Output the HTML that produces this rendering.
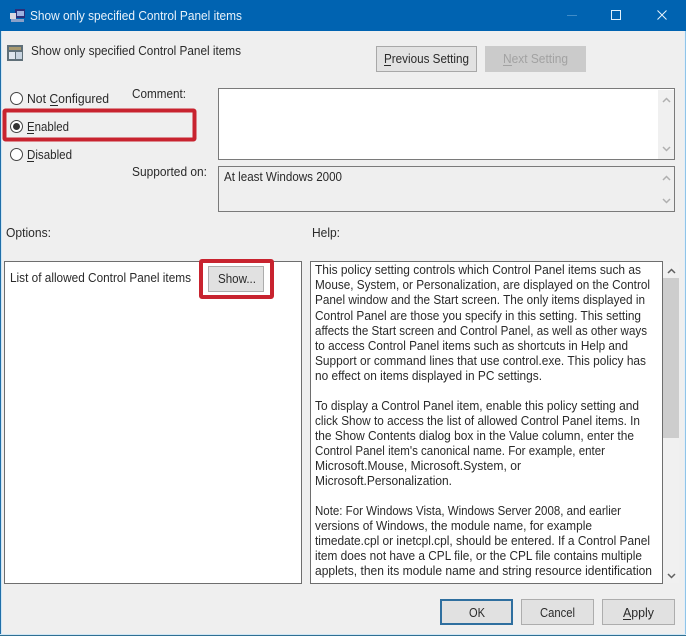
<!DOCTYPE html>
<html><head><meta charset="utf-8"><style>
html,body{margin:0;padding:0;background:#f0f0f0}
svg{display:block}
text{font-family:"Liberation Sans",sans-serif;font-size:12.5px;fill:#2a2a2a}
</style></head><body>
<svg width="686" height="636" viewBox="0 0 686 636" xmlns="http://www.w3.org/2000/svg">
<rect width="686" height="636" fill="#efefef"/>
<!-- window frame -->
<rect x="0" y="0" width="686" height="31" fill="#0063b1"/>
<rect x="0" y="31" width="1" height="605" fill="#1f6ea8"/>
<rect x="1" y="31" width="1" height="603" fill="#cfe6f5"/>
<rect x="684" y="31" width="1" height="603" fill="#e4eef7"/>
<rect x="685" y="31" width="1" height="605" fill="#8fc4e8"/>
<rect x="0" y="634" width="686" height="1" fill="#cfe6f5"/>
<rect x="0" y="635" width="686" height="1" fill="#2f6f92"/>
<!-- title icon -->
<rect x="15" y="9" width="10" height="9" fill="#2b2f7a"/>
<rect x="17" y="11" width="7" height="5" fill="#9fb2e0"/>
<rect x="10" y="13" width="6" height="6" fill="#d8d8e0"/>
<rect x="11" y="19" width="13" height="3" fill="#8aa0c8"/>
<text x="30" y="20" textLength="212" lengthAdjust="spacingAndGlyphs" style="fill:#e8f2fa">Show only specified Control Panel items</text>
<!-- caption buttons -->
<rect x="567" y="15" width="10" height="1" fill="#3f8cc8"/>
<rect x="611.500" y="10.500" width="9" height="9" fill="none" stroke="#dff0fb" stroke-width="1"/>
<path d="M657.500 10.500L666.500 19.500M666.500 10.500L657.500 19.500" stroke="#e8f4fc" stroke-width="1" fill="none"/>
<!-- header icon -->
<rect x="7" y="45" width="16" height="16" fill="#5f6f78"/>
<rect x="9" y="47" width="12" height="3" fill="#a89a70"/>
<rect x="9" y="52" width="6" height="7" fill="#dfe6ee"/>
<rect x="16" y="52" width="6" height="7" fill="#c8d4e0"/>
<text x="31" y="55" textLength="210" lengthAdjust="spacingAndGlyphs">Show only specified Control Panel items</text>
<!-- top buttons -->
<rect x="376.500" y="46.500" width="100" height="25" fill="#e2e2e2" stroke="#a8a8a8"/>
<text x="384" y="63" textLength="85" lengthAdjust="spacingAndGlyphs">Previous Setting</text>
<rect x="384" y="65" width="7" height="1" fill="#2a2a2a"/>
<rect x="485" y="46" width="101" height="26" fill="#cbcbcb"/>
<text x="503" y="63" textLength="65" lengthAdjust="spacingAndGlyphs" style="fill:#a2a2a2">Next Setting</text>
<rect x="503" y="65" width="9" height="1" fill="#a2a2a2"/>
<!-- radios -->
<circle cx="16.500" cy="98.500" r="6" fill="#fff" stroke="#444"/>
<text x="27" y="103" textLength="82" lengthAdjust="spacingAndGlyphs">Not Configured</text>
<rect x="50" y="105" width="8" height="1" fill="#2a2a2a"/>
<circle cx="16.500" cy="126.500" r="6" fill="#fff" stroke="#444"/>
<circle cx="16.500" cy="126.500" r="3.500" fill="#333"/>
<text x="27" y="131" textLength="42" lengthAdjust="spacingAndGlyphs">Enabled</text>
<rect x="27" y="133" width="7" height="1" fill="#2a2a2a"/>
<circle cx="16.500" cy="154.500" r="6" fill="#fff" stroke="#444"/>
<text x="27" y="159" textLength="45" lengthAdjust="spacingAndGlyphs">Disabled</text>
<rect x="27" y="161" width="7" height="1" fill="#2a2a2a"/>
<!-- red box 1 -->
<rect x="4.500" y="110.500" width="190" height="29" fill="none" stroke="#c8232f" stroke-width="4" rx="1"/>
<text x="132" y="98" textLength="54" lengthAdjust="spacingAndGlyphs">Comment:</text>
<text x="132" y="176" textLength="75" lengthAdjust="spacingAndGlyphs">Supported on:</text>
<!-- comment box -->
<rect x="218.500" y="88.500" width="456" height="71" fill="#fff" stroke="#7a7a7a"/>
<rect x="658" y="90" width="16" height="69" fill="#f0f0f0"/>
<path d="M663 102L666.500 98.500L670 102" stroke="#b0b0b0" stroke-width="1.500" fill="none"/>
<path d="M663 147L666.500 150.500L670 147" stroke="#b0b0b0" stroke-width="1.500" fill="none"/>
<!-- supported box -->
<rect x="218.500" y="166.500" width="456" height="45" fill="#efefef" stroke="#7a7a7a"/>
<text x="224" y="181" textLength="118" lengthAdjust="spacingAndGlyphs">At least Windows 2000</text>
<path d="M663 180L666.500 176.500L670 180" stroke="#b0b0b0" stroke-width="1.500" fill="none"/>
<path d="M663 199L666.500 202.500L670 199" stroke="#b0b0b0" stroke-width="1.500" fill="none"/>
<text x="6" y="237" textLength="45" lengthAdjust="spacingAndGlyphs">Options:</text>
<text x="312" y="237" textLength="28" lengthAdjust="spacingAndGlyphs">Help:</text>
<!-- options panel -->
<rect x="4.500" y="261.500" width="297" height="322" fill="#fff" stroke="#6e6e6e"/>
<text x="10" y="282" textLength="181" lengthAdjust="spacingAndGlyphs">List of allowed Control Panel items</text>
<rect x="208.500" y="266.500" width="55" height="25" fill="#e1e1e1" stroke="#adadad"/>
<text x="218" y="283" textLength="38" lengthAdjust="spacingAndGlyphs">Show...</text>
<rect x="201" y="261" width="71" height="36" fill="none" stroke="#c8232f" stroke-width="4" rx="1"/>
<!-- help panel -->
<rect x="310.500" y="261.500" width="352" height="322" fill="#fff" stroke="#6e6e6e"/>
<rect x="663" y="262" width="16" height="321" fill="#f0f0f0"/>
<rect x="663" y="278" width="16" height="160" fill="#cdcdcd"/>
<path d="M668 273L671.500 269.500L675 273" stroke="#606060" stroke-width="1.500" fill="none"/>
<path d="M668 574L671.500 577.500L675 574" stroke="#606060" stroke-width="1.500" fill="none"/>
<g>
<text x="315" y="274" textLength="326" lengthAdjust="spacingAndGlyphs">This policy setting controls which Control Panel items such as</text>
<text x="315" y="289" textLength="335" lengthAdjust="spacingAndGlyphs">Mouse, System, or Personalization, are displayed on the Control</text>
<text x="315" y="304" textLength="330" lengthAdjust="spacingAndGlyphs">Panel window and the Start screen. The only items displayed in</text>
<text x="315" y="320" textLength="326" lengthAdjust="spacingAndGlyphs">Control Panel are those you specify in this setting. This setting</text>
<text x="315" y="335" textLength="332" lengthAdjust="spacingAndGlyphs">affects the Start screen and Control Panel, as well as other ways</text>
<text x="315" y="350" textLength="313" lengthAdjust="spacingAndGlyphs">to access Control Panel items such as shortcuts in Help and</text>
<text x="315" y="365" textLength="331" lengthAdjust="spacingAndGlyphs">Support or command lines that use control.exe. This policy has</text>
<text x="315" y="380" textLength="227" lengthAdjust="spacingAndGlyphs">no effect on items displayed in PC settings.</text>
<text x="315" y="410" textLength="324" lengthAdjust="spacingAndGlyphs">To display a Control Panel item, enable this policy setting and</text>
<text x="315" y="425" textLength="325" lengthAdjust="spacingAndGlyphs">click Show to access the list of allowed Control Panel items. In</text>
<text x="315" y="440" textLength="319" lengthAdjust="spacingAndGlyphs">the Show Contents dialog box in the Value column, enter the</text>
<text x="315" y="455" textLength="290" lengthAdjust="spacingAndGlyphs">Control Panel item's canonical name. For example, enter</text>
<text x="315" y="470" textLength="206" lengthAdjust="spacingAndGlyphs">Microsoft.Mouse, Microsoft.System, or</text>
<text x="315" y="485" textLength="137" lengthAdjust="spacingAndGlyphs">Microsoft.Personalization.</text>
<text x="315" y="515" textLength="306" lengthAdjust="spacingAndGlyphs">Note: For Windows Vista, Windows Server 2008, and earlier</text>
<text x="315" y="530" textLength="277" lengthAdjust="spacingAndGlyphs">versions of Windows, the module name, for example</text>
<text x="315" y="545" textLength="335" lengthAdjust="spacingAndGlyphs">timedate.cpl or inetcpl.cpl, should be entered. If a Control Panel</text>
<text x="315" y="560" textLength="327" lengthAdjust="spacingAndGlyphs">item does not have a CPL file, or the CPL file contains multiple</text>
<text x="315" y="575" textLength="337" lengthAdjust="spacingAndGlyphs">applets, then its module name and string resource identification</text>
</g>
<!-- bottom buttons -->
<rect x="441" y="600" width="71" height="24" fill="#e1e1e1" stroke="#2f6f9f" stroke-width="2"/>
<text x="469" y="617" textLength="16" lengthAdjust="spacingAndGlyphs">OK</text>
<rect x="521.500" y="599.500" width="72" height="25" fill="#e1e1e1" stroke="#adadad"/>
<text x="540" y="617" textLength="35" lengthAdjust="spacingAndGlyphs">Cancel</text>
<rect x="602.500" y="599.500" width="72" height="25" fill="#e1e1e1" stroke="#adadad"/>
<text x="623" y="617" textLength="31" lengthAdjust="spacingAndGlyphs">Apply</text>
<rect x="623" y="619" width="8" height="1" fill="#2a2a2a"/>
</svg>
</body></html>
